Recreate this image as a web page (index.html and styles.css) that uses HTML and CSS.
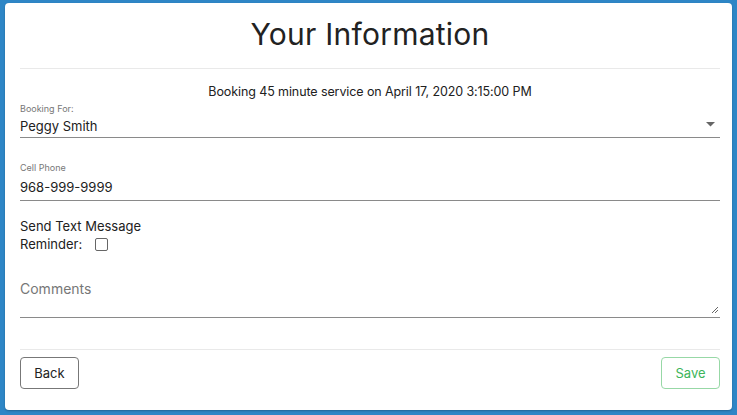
FILE: index.html
```html
<!DOCTYPE html>
<html>
<head>
<meta charset="utf-8">
<link rel="stylesheet" href="styles.css">
</head>
<body>
<div class="card">
  <header class="header">
    <h1 class="title">Your Information</h1>
  </header>
  <div class="body">
    <p class="summary">Booking 45 minute service on April 17, 2020 3:15:00 PM</p>
    <div class="field field-select">
      <label class="label">Booking For:</label>
      <div class="control">
        <span class="value">Peggy Smith</span>
        <svg class="caret" width="9" height="5" viewBox="0 0 9 5"><path d="M0 0H9L4.5 4.5Z" fill="#666"/></svg>
      </div>
    </div>
    <div class="field field-phone">
      <label class="label">Cell Phone</label>
      <div class="control">
        <span class="value">968-999-9999</span>
      </div>
    </div>
    <div class="reminder">
      <div class="reminder-line">Send Text Message</div>
      <div class="reminder-line">Reminder:<span class="checkbox"></span></div>
    </div>
    <div class="comments">
      <span class="placeholder">Comments</span>
      <svg class="grip" width="8" height="8" viewBox="0 0 8 8"><path d="M1 7L7 1M4 7L7 4" stroke="#666" stroke-width="1"/></svg>
    </div>
  </div>
  <footer class="footer">
    <button class="btn btn-back">Back</button>
    <button class="btn btn-save">Save</button>
  </footer>
</div>
</body>
</html>
```
FILE: styles.css
```css
html, body {
  margin: 0;
  height: 100%;
}
body {
  background: #2e86c6;
  padding: 3px 5px 5px 5px;
  box-sizing: border-box;
  font-family: Inter, "Noto Sans", sans-serif;
  color: #212121;
}
.card {
  background: #fff;
  border-radius: 4px;
  height: 100%;
  box-sizing: border-box;
  padding: 0 12px 0 15px;
  display: flex;
  flex-direction: column;
  box-shadow: 0 1px 2px rgba(0,0,0,0.25);
}
.header {
  padding-top: 13px;
  padding-bottom: 16px;
  border-bottom: 1px solid #e9e9e9;
}
.title {
  margin: 0;
  font-size: 30px;
  line-height: 36px;
  font-weight: 400;
  letter-spacing: 0.25px;
  text-align: center;
  color: #222;
}
.body {
  flex: 1;
  border-bottom: 1px solid #e9e9e9;
}
.summary {
  margin: 13px 0 0 0;
  font-size: 12.5px;
  letter-spacing: -0.1px;
  line-height: 20px;
  text-align: center;
}
.field {
  display: flex;
  flex-direction: column;
}
.label {
  font-size: 9px;
  line-height: 12px;
  color: #777;
}
.control {
  display: flex;
  align-items: center;
  justify-content: space-between;
  height: 22px;
  border-bottom: 1px solid #8a8a8a;
  font-size: 13px;
}
.field-select {
  margin-top: 1px;
}
.field-phone {
  margin-top: 24px;
}
.field-phone .control {
  height: 26px;
}
.caret {
  margin-right: 5px;
  margin-top: -3px;
}
.reminder {
  margin-top: 16px;
  font-size: 13px;
  line-height: 18px;
}
.reminder-line {
  display: flex;
  align-items: center;
}
.checkbox {
  display: inline-block;
  width: 11px;
  height: 11px;
  border: 1.5px solid #666;
  border-radius: 2px;
  margin-left: 13px;
}
.comments {
  margin-top: 27px;
  height: 37px;
  border-bottom: 1px solid #8a8a8a;
  position: relative;
  font-size: 14px;
  color: #777;
}
.grip {
  position: absolute;
  right: 1px;
  bottom: 3px;
}
.footer {
  display: flex;
  justify-content: space-between;
  padding: 7px 0 21px 0;
}
.btn {
  font-family: inherit;
  font-size: 13px;
  height: 32px;
  width: 59px;
  background: #fff;
  border-radius: 4px;
  padding: 0;
  cursor: pointer;
}
.btn-back {
  border: 1px solid #777;
  color: #222;
}
.btn-save {
  border: 1px solid #97d8a6;
  color: #3cb55a;
}
```
